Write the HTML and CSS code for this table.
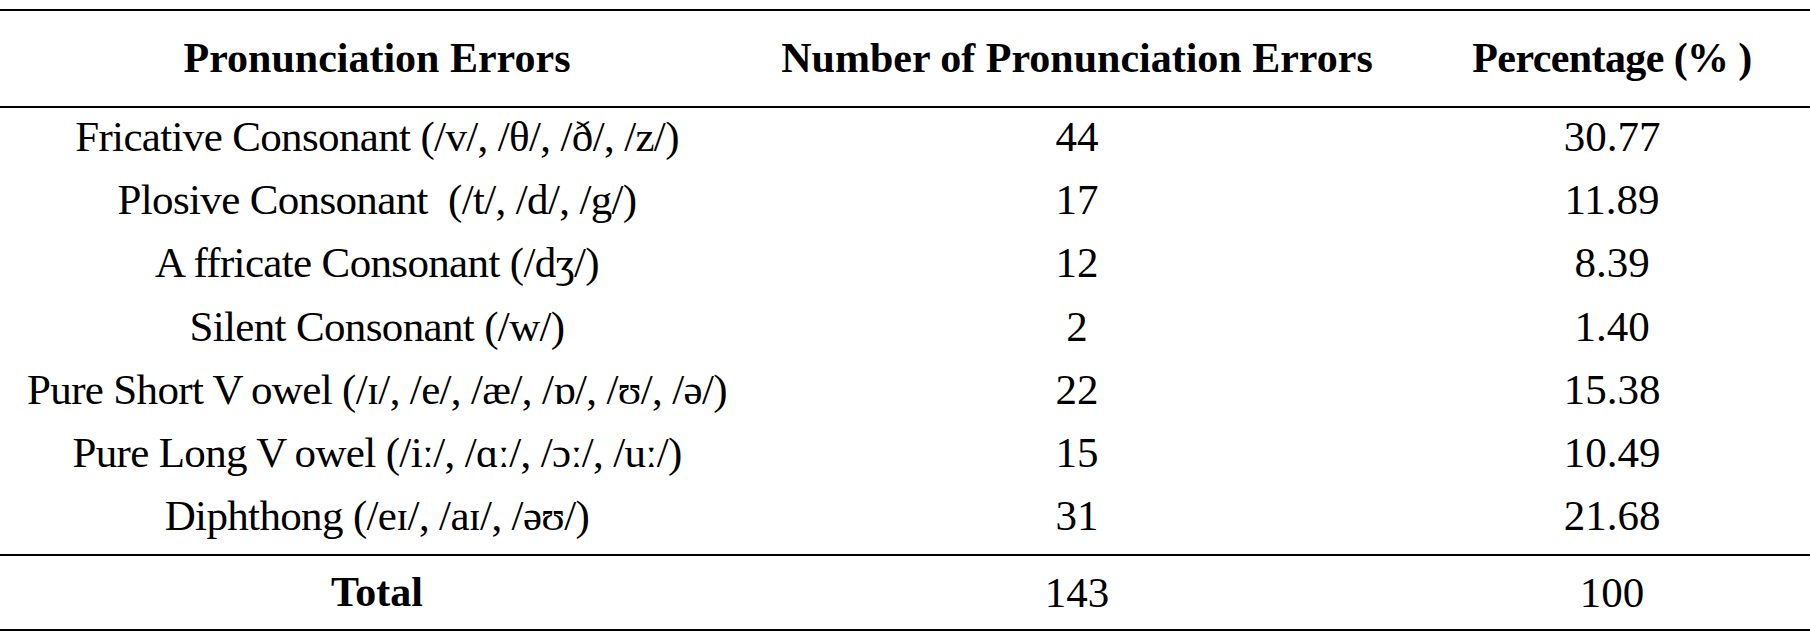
FILE: index.html
```html
<!DOCTYPE html>
<html lang="en">
<head>
<meta charset="utf-8">
<title>Pronunciation Errors</title>
<link rel="stylesheet" href="styles.css">
</head>
<body>
<div class="table">
  <div class="row head">
    <div class="cell c1">Pronunciation Errors</div>
    <div class="cell c2">Number of Pronunciation Errors</div>
    <div class="cell c3 tight">Percentage (% )</div>
  </div>
  <div class="body">
    <div class="row">
      <div class="cell c1">Fricative Consonant (/v/, /θ/, /ð/, /z/)</div>
      <div class="cell c2">44</div>
      <div class="cell c3">30.77</div>
    </div>
    <div class="row">
      <div class="cell c1">Plosive Consonant &nbsp;(/t/, /d/, /g/)</div>
      <div class="cell c2">17</div>
      <div class="cell c3">11.89</div>
    </div>
    <div class="row">
      <div class="cell c1"><span class="gap">A</span>ffricate Consonant (/dʒ/)</div>
      <div class="cell c2">12</div>
      <div class="cell c3">8.39</div>
    </div>
    <div class="row">
      <div class="cell c1">Silent Consonant (/w/)</div>
      <div class="cell c2">2</div>
      <div class="cell c3">1.40</div>
    </div>
    <div class="row">
      <div class="cell c1">Pure Short <span class="gap">V</span>owel (/ɪ/, /e/, /æ/, /ɒ/, /ʊ/, /ə/)</div>
      <div class="cell c2">22</div>
      <div class="cell c3">15.38</div>
    </div>
    <div class="row">
      <div class="cell c1">Pure Long <span class="gap">V</span>owel (/iː/, /ɑː/, /ɔː/, /uː/)</div>
      <div class="cell c2">15</div>
      <div class="cell c3">10.49</div>
    </div>
    <div class="row">
      <div class="cell c1">Diphthong (/eɪ/, /aɪ/, /əʊ/)</div>
      <div class="cell c2">31</div>
      <div class="cell c3">21.68</div>
    </div>
  </div>
  <div class="row total">
    <div class="cell c1 bold">Total</div>
    <div class="cell c2">143</div>
    <div class="cell c3">100</div>
  </div>
</div>
</body>
</html>
```

FILE: styles.css
```css
html, body {
  margin: 0;
  padding: 0;
  background: #ffffff;
}

body {
  padding-top: 9px;
  font-family: "Liberation Serif", "DejaVu Serif", serif;
  color: #000000;
}

.table {
  width: 1810px;
  border-top: 2px solid #000;
  border-bottom: 2px solid #000;
}

.row {
  display: grid;
  grid-template-columns: 754px 646px 1fr;
  white-space: nowrap;
}

.cell {
  text-align: center;
}

.c3 {
  padding-left: 14px;
}

.head {
  height: 95px;
  line-height: 95px;
  font-size: 42px;
  font-weight: bold;
  border-bottom: 2px solid #000;
}

.tight {
  letter-spacing: -0.6px;
}

.body {
  margin-top: -3px;
  padding-bottom: 6.6px;
}

.body .row {
  height: 63.2px;
  line-height: 63.2px;
  font-size: 43px;
}

.body .c1 {
  letter-spacing: -0.65px;
}

.gap {
  margin-right: 8px;
}

.total {
  height: 73px;
  line-height: 73px;
  font-size: 43px;
  border-top: 2px solid #000;
}

.bold {
  font-weight: bold;
  font-size: 42px;
}
```
